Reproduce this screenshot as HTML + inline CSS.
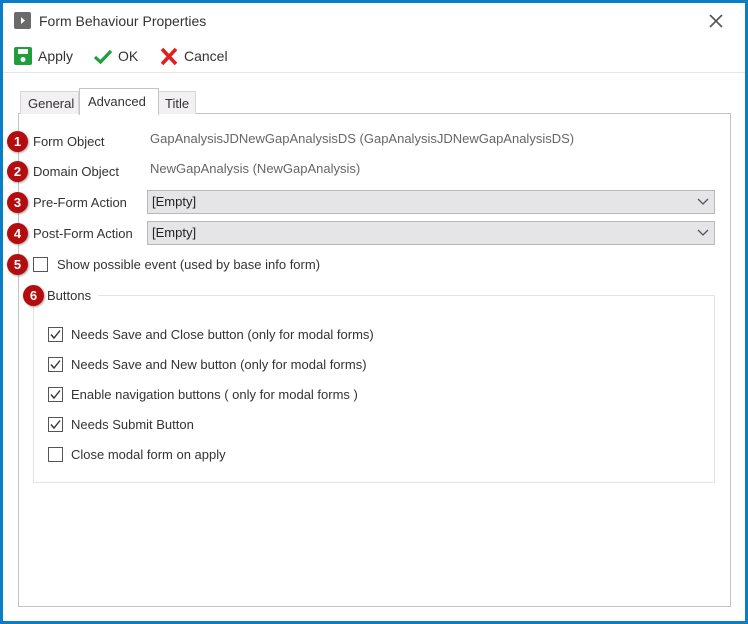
<!DOCTYPE html>
<html><head><meta charset="utf-8"><style>
*{margin:0;padding:0;box-sizing:border-box}
body{width:748px;height:624px;background:#0a7ec4;position:relative;overflow:hidden;font-family:"Liberation Sans",sans-serif;font-size:13px;color:#333}
.win{position:absolute;left:3px;top:3px;width:742px;height:618px;background:#fff}
.a{position:absolute;white-space:nowrap}
.badge{position:absolute;width:21px;height:21px;border-radius:50%;background:#b30d10;color:#fff;font-weight:bold;font-size:13px;text-align:center;line-height:21px;box-shadow:1px 1px 2px rgba(0,0,0,.35)}
.dd{position:absolute;left:147px;width:568px;height:24px;background:#e5e5e8;border:1px solid #b8b8b8;padding-left:4px;line-height:22px;color:#222}
.cb{position:absolute;width:15px;height:15px;border:1px solid #555;background:#fff}
</style></head><body>
<div class="win"></div>
<!-- title -->
<div class="a" style="left:14px;top:12px;width:17px;height:17px;background:#6a6a6a;border-radius:2px"></div>
<svg class="a" style="left:14px;top:12px" width="17" height="17"><path d="M7 5 L11 8.5 L7 12Z" fill="#fff"/></svg>
<div class="a" style="left:39px;top:13px;font-size:14px;color:#333">Form Behaviour Properties</div>
<svg class="a" style="left:709px;top:14px" width="14" height="14"><path d="M1 1L13 13M13 1L1 13" stroke="#555" stroke-width="1.6"/></svg>
<!-- toolbar -->
<svg class="a" style="left:14px;top:47px" width="18" height="18"><rect x="0" y="0" width="18" height="18" rx="2" fill="#1f9e3b"/><rect x="4" y="2" width="10" height="5" fill="#fff"/><circle cx="9" cy="12.5" r="2.5" fill="#fff"/></svg>
<div class="a" style="left:38px;top:48px;font-size:14px">Apply</div>
<svg class="a" style="left:93px;top:49px" width="20" height="16"><path d="M2 8L7.5 13L18 2" stroke="#1f9e3b" stroke-width="3.2" fill="none"/></svg>
<div class="a" style="left:118px;top:48px;font-size:14px">OK</div>
<svg class="a" style="left:160px;top:47px" width="18" height="19"><path d="M2 2L16 17M16 2L2 17" stroke="#e02020" stroke-width="3.6"/></svg>
<div class="a" style="left:184px;top:48px;font-size:14px">Cancel</div>
<div class="a" style="left:3px;top:72px;width:742px;height:1px;background:#e6e6e6"></div>
<!-- tabs -->
<div class="a" style="left:18px;top:113px;width:713px;height:494px;border:1px solid #c4c4c4"></div>
<div class="a" style="left:20px;top:91px;width:59px;height:23px;background:#f2f0f2;border:1px solid #d6d6d6;border-bottom:none;padding:4px 0 0 7px">General</div>
<div class="a" style="left:158px;top:91px;width:38px;height:23px;background:#f2f0f2;border:1px solid #d6d6d6;border-bottom:none;padding:4px 0 0 6px">Title</div>
<div class="a" style="left:79px;top:88px;width:80px;height:27px;background:#fff;border:1px solid #c4c4c4;border-bottom:none;padding:5px 0 0 8px">Advanced</div>
<!-- rows -->
<div class="badge" style="left:7px;top:131px">1</div>
<div class="a" style="left:33px;top:134px">Form Object</div>
<div class="a" style="left:150px;top:131px;color:#666">GapAnalysisJDNewGapAnalysisDS (GapAnalysisJDNewGapAnalysisDS)</div>
<div class="badge" style="left:7px;top:161px">2</div>
<div class="a" style="left:33px;top:164px">Domain Object</div>
<div class="a" style="left:150px;top:161px;color:#666">NewGapAnalysis (NewGapAnalysis)</div>
<div class="badge" style="left:7px;top:192px">3</div>
<div class="a" style="left:33px;top:195px">Pre-Form Action</div>
<div class="dd" style="top:190px">[Empty]</div>
<div class="badge" style="left:7px;top:223px">4</div>
<div class="a" style="left:33px;top:226px">Post-Form Action</div>
<div class="dd" style="top:221px">[Empty]</div>
<svg class="a" style="left:697px;top:198px" width="12" height="8"><path d="M1 1L6 6L11 1" stroke="#555" stroke-width="1.3" fill="none"/></svg>
<svg class="a" style="left:697px;top:229px" width="12" height="8"><path d="M1 1L6 6L11 1" stroke="#555" stroke-width="1.3" fill="none"/></svg>
<div class="badge" style="left:7px;top:254px">5</div>
<div class="cb" style="left:33px;top:257px"></div>
<div class="a" style="left:57px;top:257px">Show possible event (used by base info form)</div>
<!-- group -->
<div class="a" style="left:33px;top:295px;width:682px;height:188px;border:1px solid #e3e3e3"></div>
<div class="a" style="left:44px;top:287px;width:54px;height:16px;background:#fff"></div>
<div class="badge" style="left:23px;top:285px">6</div>
<div class="a" style="left:47px;top:288px">Buttons</div>
<div class="cb" style="left:48px;top:327px"></div>
<div class="cb" style="left:48px;top:357px"></div>
<div class="cb" style="left:48px;top:387px"></div>
<div class="cb" style="left:48px;top:417px"></div>
<div class="cb" style="left:48px;top:447px"></div>
<svg class="a" style="left:48px;top:327px" width="15" height="105"><g stroke="#333" stroke-width="1.4" fill="none"><path d="M3 7.5L6 11L12 3.5"/><path d="M3 37.5L6 41L12 33.5"/><path d="M3 67.5L6 71L12 63.5"/><path d="M3 97.5L6 101L12 93.5"/></g></svg>
<div class="a" style="left:71px;top:327px">Needs Save and Close button (only for modal forms)</div>
<div class="a" style="left:71px;top:357px">Needs Save and New button (only for modal forms)</div>
<div class="a" style="left:71px;top:387px">Enable navigation buttons ( only for modal forms )</div>
<div class="a" style="left:71px;top:417px">Needs Submit Button</div>
<div class="a" style="left:71px;top:447px">Close modal form on apply</div>
</body></html>
